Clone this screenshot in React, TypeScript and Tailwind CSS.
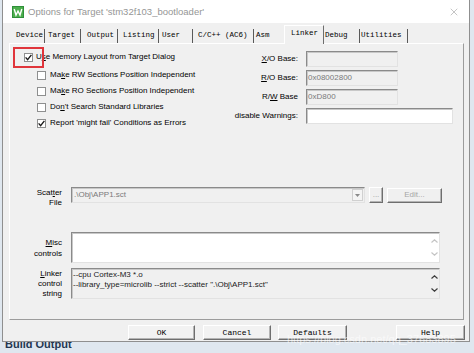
import { X } from "lucide-react";

const ui = "font-['Liberation_Sans',Arial,sans-serif]";
const mono = "font-['Liberation_Mono','Courier_New',monospace]";

// sunken edit box border, classic win32 look
const sunken =
  "border border-t-[#8a8a8a] border-l-[#8a8a8a] border-b-[#e2e2e2] border-r-[#e2e2e2] shadow-[inset_1px_1px_0_#c8c8c8]";
const raised =
  "border border-t-white border-l-white border-b-[#6e6e6e] border-r-[#6e6e6e] shadow-[inset_-1px_-1px_0_#b4b4b4]";

function Check({ checked }: { checked?: boolean }) {
  return (
    <span className="flex h-[9px] w-[9px] shrink-0 items-center justify-center border border-[#8e8f8f] bg-white">
      {checked && (
        <svg width="7" height="7" viewBox="0 0 7 7">
          <path d="M0.6 3.4 L2.6 5.6 L6.4 0.9" stroke="#1a1a1a" strokeWidth="1.4" fill="none" />
        </svg>
      )}
    </span>
  );
}

function Arrows({ dark }: { dark?: boolean }) {
  const c = dark ? "#3c3c3c" : "#c4c4c4";
  return (
    <div className="ml-auto flex h-full w-[10px] flex-col items-center justify-around py-[2px]">
      <svg width="7" height="4" viewBox="0 0 7 4">
        <path d="M0.5 3.5 L3.5 0.8 L6.5 3.5" stroke={c} strokeWidth="1.2" fill="none" />
      </svg>
      <svg width="7" height="4" viewBox="0 0 7 4">
        <path d="M0.5 0.5 L3.5 3.2 L6.5 0.5" stroke={c} strokeWidth="1.2" fill="none" />
      </svg>
    </div>
  );
}

const tabs = [
  { label: "Device", w: "w-[33px]", pl: "pl-[4px]", sep: true },
  { label: "Target", w: "w-[36px]", pl: "pl-[3px]", sep: true },
  { label: "Output", w: "w-[37px]", pl: "pl-[6px]", sep: true },
  { label: "Listing", w: "w-[41px]", pl: "pl-[5px]", sep: true },
  { label: "User", w: "w-[34px]", pl: "pl-[3px]", sep: true },
  { label: "C/C++ (AC6)", w: "w-[61px]", pl: "pl-[5px]", sep: true },
  { label: "Asm", w: "w-[30px]", pl: "pl-[2px]", sep: false },
  { label: "Linker", w: "w-[40px]", pl: "pl-[6px]", sep: false, active: true },
  { label: "Debug", w: "w-[36px]", pl: "pl-[1px]", sep: true },
  { label: "Utilities", w: "w-[48px]", pl: "pl-[1px]", sep: true },
];

const options = [
  { pre: "Ma", key: "k", post: "e RW Sections Position Independent", checked: false },
  { pre: "Ma", key: "k", post: "e RO Sections Position Independent", checked: false },
  { pre: "Do", key: "n", post: "'t Search Standard Libraries", checked: false },
  { pre: "Report 'might fail' Conditions as Errors", key: "", post: "", checked: true },
];

export default function App() {
  return (
    <div className={`relative h-[353px] w-[474px] overflow-hidden bg-[#dfe7ef] text-[8px] text-black ${ui}`}>
      <div className="ml-[2px] flex h-[342px] w-[468px] flex-col border-x border-b border-[#8f8f8f] bg-[#f0f0f0]">
        {/* title bar */}
        <div className="flex h-[23px] shrink-0 items-center bg-white pl-[9px] pt-[1px]">
          <svg width="12" height="12" viewBox="0 0 12 12">
            <rect x="0" y="0" width="12" height="12" fill="#2f8f3a" />
            <rect x="1" y="1" width="10" height="10" fill="#4cae4c" />
            <path d="M2.2 3 L4 9 L6 5 L8 9 L9.8 3" stroke="#fff" strokeWidth="1.4" fill="none" />
          </svg>
          <span className="ml-[4px] text-[9.5px] text-[#969696]">Options for Target 'stm32f103_bootloader'</span>
          <X className="ml-auto mr-[9px] text-[#8a8a8a]" size={12} strokeWidth={1} />
        </div>

        {/* tabs */}
        <div className={`flex h-[20px] shrink-0 items-end pl-[9px] text-[7.5px] ${mono}`}>
          {tabs.map((t) =>
            t.active ? (
              <div
                key={t.label}
                className={`relative z-10 -mb-px flex h-[19px] ${t.w} ${t.pl} items-center border-l border-t border-r border-l-white border-t-white border-r-[#6e6e6e] bg-[#f0f0f0] pb-[2px]`}
              >
                {t.label}
              </div>
            ) : (
              <div
                key={t.label}
                className={`flex h-[14px] ${t.w} ${t.pl} items-center ${t.sep ? "border-r border-r-[#5a5a5a]" : ""}`}
              >
                {t.label}
              </div>
            ),
          )}
        </div>

        {/* page */}
        <div className="ml-[6px] h-[277px] w-[455px] shrink-0 border border-t-white border-l-white border-r-[#9c9c9c] border-b-[#9c9c9c]">
          <div className="flex">
            <div className="flex w-[220px] flex-col pl-[14px] pt-[5px]">
              <div className="flex h-[16px] items-center gap-[3px]">
                <Check checked />
                <span>
                  U<span className="underline">s</span>e Memory Layout from Target Dialog
                </span>
              </div>
              <div className="mt-[2px] flex flex-col pl-[13px]">
                {options.map((o) => (
                  <div key={o.pre + o.post} className="flex h-[16px] items-center gap-[4px]">
                    <Check checked={o.checked} />
                    <span>
                      {o.pre}
                      {o.key && <span className="underline">{o.key}</span>}
                      {o.post}
                    </span>
                  </div>
                ))}
              </div>
            </div>

            <div className="flex flex-col gap-[3px] pt-[7px]">
              {[
                { l: <><span className="underline">X</span>/O Base:</>, v: "", w: "w-[92px]", bg: "bg-[#f0f0f0]" },
                { l: <><span className="underline">R</span>/O Base:</>, v: "0x08002800", w: "w-[92px]", bg: "bg-[#f0f0f0]" },
                { l: <>R/<span className="underline">W</span> Base</>, v: "0xD800", w: "w-[92px]", bg: "bg-[#f0f0f0]" },
                { l: <>disable Warnings:</>, v: "", w: "w-[147px]", bg: "bg-white" },
              ].map((r, i) => (
                <div key={i} className="flex h-[16px] items-center">
                  <div className="flex w-[68px] justify-end whitespace-nowrap">
                    <span>{r.l}</span>
                  </div>
                  <div className={`ml-[8px] flex h-[16px] ${r.w} items-center ${r.bg} ${sunken} pl-[1px] text-[#7a7a7a]`}>
                    {r.v}
                  </div>
                </div>
              ))}
            </div>
          </div>

          {/* scatter file */}
          <div className="mt-[56px] flex h-[16px] items-center">
            <div className="flex w-[52px] flex-col items-end pt-[5px] leading-[10px]">
              <span>
                Scat<span className="underline">t</span>er
              </span>
              <span>File</span>
            </div>
            <div className={`ml-[9px] flex h-[16px] w-[294px] items-center bg-[#f0f0f0] ${sunken} pl-[2px] text-[#7a7a7a]`}>
              .\Obj\APP1.sct
              <div className="ml-auto mr-[1px] flex h-[12px] w-[11px] items-center justify-center border border-[#d0d0d0] bg-[#f4f4f4]">
                <svg width="5" height="3" viewBox="0 0 5 3">
                  <path d="M0 0 L5 0 L2.5 3 Z" fill="#8a8a8a" />
                </svg>
              </div>
            </div>
            <div className={`ml-[4px] flex h-[16px] w-[14px] items-center justify-center bg-[#f0f0f0] ${raised} text-[#a0a0a0]`}>
              ...
            </div>
            <div className={`ml-[4px] flex h-[15px] w-[55px] items-center justify-center bg-[#f0f0f0] ${raised} text-[#a6a6a6]`}>
              Edit...
            </div>
          </div>

          {/* misc controls */}
          <div className="mt-[29px] flex h-[31px] items-center">
            <div className="flex w-[52px] flex-col items-end leading-[11px]">
              <span>
                <span className="underline">M</span>isc
              </span>
              <span>controls</span>
            </div>
            <div className={`ml-[9px] flex h-[31px] w-[369px] bg-white ${sunken}`}>
              <Arrows />
            </div>
          </div>

          {/* linker control string */}
          <div className="mt-[5px] flex h-[31px] items-center">
            <div className="flex w-[52px] flex-col items-end leading-[10px]">
              <span>
                <span className="underline">L</span>inker
              </span>
              <span>control</span>
              <span>string</span>
            </div>
            <div className={`ml-[9px] flex h-[31px] w-[369px] bg-[#f0f0f0] ${sunken}`}>
              <div className="flex flex-col pl-[1px] pt-[1px] leading-[10px] text-[#1a1a1a]">
                <span>--cpu Cortex-M3 *.o</span>
                <span>--library_type=microlib --strict --scatter ".\Obj\APP1.sct"</span>
              </div>
              <Arrows dark />
            </div>
          </div>
        </div>

        {/* buttons */}
        <div className={`mt-[5px] flex text-[8px] ${mono}`}>
          {[
            { t: "OK", c: "ml-[125px] w-[67px]" },
            { t: "Cancel", c: "ml-[8px] w-[68px]" },
            { t: "Defaults", c: "ml-[7px] w-[69px]" },
            { t: "Help", c: "ml-[49px] w-[69px]" },
          ].map((b) => (
            <div key={b.t} className={`flex h-[15px] items-center justify-center bg-[#f2f2f2] ${raised} ${b.c}`}>
              {b.t}
            </div>
          ))}
        </div>
      </div>

      {/* build output strip below the dialog, its top hidden by the dialog */}
      <div className="h-[11px] overflow-hidden pl-[5px]">
        <div className="-mt-[5px] text-[11px] font-bold leading-[14px] text-[#243650]">Build Output</div>
      </div>

      {/* watermark */}
      <div className="pointer-events-none absolute left-[287px] top-[331px] text-[11px] text-white/60">
        https://blog.csdn.net/qq_37683895
      </div>

      {/* red annotation box */}
      <div className="absolute left-[13px] top-[47px] h-[21px] w-[31px] border-2 border-[#e0353b]" />
    </div>
  );
}
